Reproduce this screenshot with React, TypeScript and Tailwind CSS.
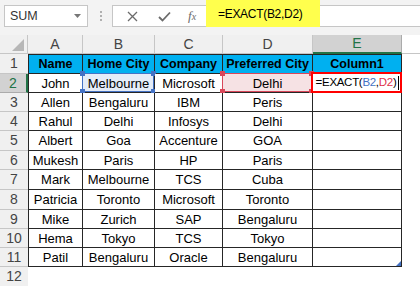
import type { ReactNode } from 'react'

const cols = ['A', 'B', 'C', 'D', 'E']
const widths = ['w-[55px]', 'w-[72px]', 'w-[68px]', 'w-[90px]', 'w-[89px]']
const heights = ['h-[20px]', 'h-[19px]', 'h-[19px]', 'h-[19px]', 'h-[20px]', 'h-[19px]', 'h-[20px]', 'h-[20px]', 'h-[19px]', 'h-[19px]', 'h-[19px]']

const rows: string[][] = [
  ['Name', 'Home City', 'Company', 'Preferred City', 'Column1'],
  ['John', 'Melbourne', 'Microsoft', 'Delhi', ''],
  ['Allen', 'Bengaluru', 'IBM', 'Peris', ''],
  ['Rahul', 'Delhi', 'Infosys', 'Delhi', ''],
  ['Albert', 'Goa', 'Accenture', 'GOA', ''],
  ['Mukesh', 'Paris', 'HP', 'Paris', ''],
  ['Mark', 'Melbourne', 'TCS', 'Cuba', ''],
  ['Patricia', 'Toronto', 'Microsoft', 'Toronto', ''],
  ['Mike', 'Zurich', 'SAP', 'Bengaluru', ''],
  ['Hema', 'Tokyo', 'TCS', 'Tokyo', ''],
  ['Patil', 'Bengaluru', 'Oracle', 'Bengaluru', ''],
]

const Handles = ({ color }: { color: string }) => (
  <>
    <span className={`absolute -left-[3px] -top-[3px] h-[5px] w-[5px] ${color}`} />
    <span className={`absolute -right-[3px] -top-[3px] h-[5px] w-[5px] ${color}`} />
    <span className={`absolute -bottom-[3px] -left-[3px] h-[5px] w-[5px] ${color}`} />
    <span className={`absolute -bottom-[3px] -right-[3px] h-[5px] w-[5px] ${color}`} />
  </>
)

const Cell = ({ r, c, text }: { r: number; c: number; text: string }) => {
  const header = r === 0
  let extra = header ? 'bg-[#00b0f0] font-bold text-[12.5px]' : 'bg-white text-[13px]'
  let overlay: ReactNode = null
  let content: ReactNode = text
  if (r === 1 && c === 1) {
    extra = 'bg-[#e4ecf8] text-[13px]'
    overlay = (
      <span className="pointer-events-none absolute -left-px -top-px bottom-0 right-0 border border-[#4472c4]">
        <Handles color="bg-[#4472c4]" />
      </span>
    )
  }
  if (r === 1 && c === 3) {
    extra = 'bg-[#f6e2e4] text-[13px]'
    overlay = (
      <span className="pointer-events-none absolute -left-px -top-px bottom-0 right-0 border border-[#d9475a]">
        <Handles color="bg-[#d9475a]" />
      </span>
    )
  }
  if (r === 1 && c === 4) {
    overlay = <span className="pointer-events-none absolute -left-[2px] -top-[2px] -bottom-px -right-px border-2 border-[#f00]" />
    content = (
      <span className="flex w-full items-center pl-[1px] text-[11.5px] tracking-[-0.3px]">
        =EXACT(<span className="text-[#4472c4]">B2</span>,<span className="text-[#e0304a]">D2</span>)
        <span className="ml-[2px] inline-block h-[14px] w-px bg-black" />
      </span>
    )
  }
  return (
    <div
      className={`relative flex items-center justify-center border-b border-r border-[#262626] text-black ${widths[c]} ${c === 0 ? 'border-l' : ''} ${header ? 'border-t' : ''} ${extra}`}
    >
      <span className="leading-none">{content}</span>
      {overlay}
    </div>
  )
}

export default function App() {
  return (
    <div className="h-[286px] w-[420px] overflow-hidden bg-white font-['Liberation_Sans',Arial,sans-serif]">
      {/* formula bar */}
      <div className="relative flex h-[33px] items-start bg-[#f3f3f3] pt-[5px]">
        <div className="ml-[4px] flex h-[22px] w-[84px] items-center justify-between border border-[#c6c6c6] bg-white pl-[5px] pr-[6px] text-[12.5px] text-[#333]">
          <span>SUM</span>
          <svg width="7" height="4" viewBox="0 0 7 4">
            <path d="M0 0h7L3.5 4z" fill="#777" />
          </svg>
        </div>
        <div className="ml-[12px] mt-[6px] flex flex-col gap-[2px]">
          <span className="h-[2px] w-[2px] bg-[#b0b0b0]" />
          <span className="h-[2px] w-[2px] bg-[#b0b0b0]" />
          <span className="h-[2px] w-[2px] bg-[#b0b0b0]" />
        </div>
        <div className="ml-[10px] flex h-[22px] flex-1 items-center border-y border-l border-[#c6c6c6] bg-white">
          <div className="flex w-[92px] items-center pl-[14px]">
            <svg width="11" height="11" viewBox="0 0 11 11" className="mr-[20px]">
              <path d="M1 1l9 9M10 1l-9 9" stroke="#6b6b6b" strokeWidth="1.3" />
            </svg>
            <svg width="13" height="11" viewBox="0 0 13 11" className="mr-[17px]">
              <path d="M1 6l3.5 3.5L12 1.5" stroke="#6b6b6b" strokeWidth="1.8" fill="none" />
            </svg>
            <span className="font-['Liberation_Serif',serif] text-[13px] italic text-[#6b6b6b]">
              f<span className="text-[10px]">x</span>
            </span>
          </div>
        </div>
        <div className="absolute left-[206px] top-0 flex h-[27px] w-[114px] items-center bg-[#ffff4d] pl-[12px] text-[12px] tracking-[-0.3px] text-black">
          =EXACT(B2,D2)
        </div>
      </div>
      <div className="h-[2px] bg-[#f3f3f3]" />

      {/* column headers */}
      <div className="flex h-[19px] bg-white">
        <div className="relative h-full w-[28px] border-b border-r border-[#c6c6c6] bg-[#f0f0f0]">
          <svg width="12" height="12" viewBox="0 0 12 12" className="absolute bottom-[2px] right-[3px]">
            <path d="M12 0V12H0z" fill="#b7b7b7" />
          </svg>
        </div>
        {cols.map((c, i) => (
          <div
            key={c}
            className={`flex h-full items-center justify-center border-r text-[14px] ${widths[i]} ${
              c === 'E'
                ? 'border-b-2 border-b-[#217346] border-r-[#ababab] bg-[#d2d2d2] text-[#217346]'
                : 'border-b border-[#c6c6c6] bg-[#f0f0f0] text-[#444]'
            }`}
          >
            {c}
          </div>
        ))}
        <div className="h-full flex-1 border-b border-[#c6c6c6] bg-white" />
      </div>

      {/* data rows */}
      {rows.map((row, r) => (
        <div key={r} className={`flex ${heights[r]}`}>
          <div
            className={`flex h-full w-[28px] items-center justify-center text-[14px] ${
              r === 1
                ? 'border-b border-r-2 border-b-[#ababab] border-r-[#217346] bg-[#d2d2d2] text-[#217346]'
                : 'border-b border-[#c6c6c6] bg-[#f0f0f0] text-[#444]'
            }`}
          >
            {r + 1}
          </div>
          {row.map((text, c) => (
            <Cell key={c} r={r} c={c} text={text} />
          ))}
          <div className="relative h-full flex-1">
            {r === 10 && (
              <svg width="5" height="5" viewBox="0 0 5 5" className="absolute -left-[6px] bottom-px">
                <path d="M5 0V5H0z" fill="#4472c4" />
              </svg>
            )}
          </div>
        </div>
      ))}

      <div className="flex h-[20px]">
        <div className="flex h-full w-[28px] items-center justify-center border-b border-[#c6c6c6] bg-[#f0f0f0] text-[14px] text-[#444]">
          12
        </div>
        <div className="flex-1 bg-white" />
      </div>
    </div>
  )
}
